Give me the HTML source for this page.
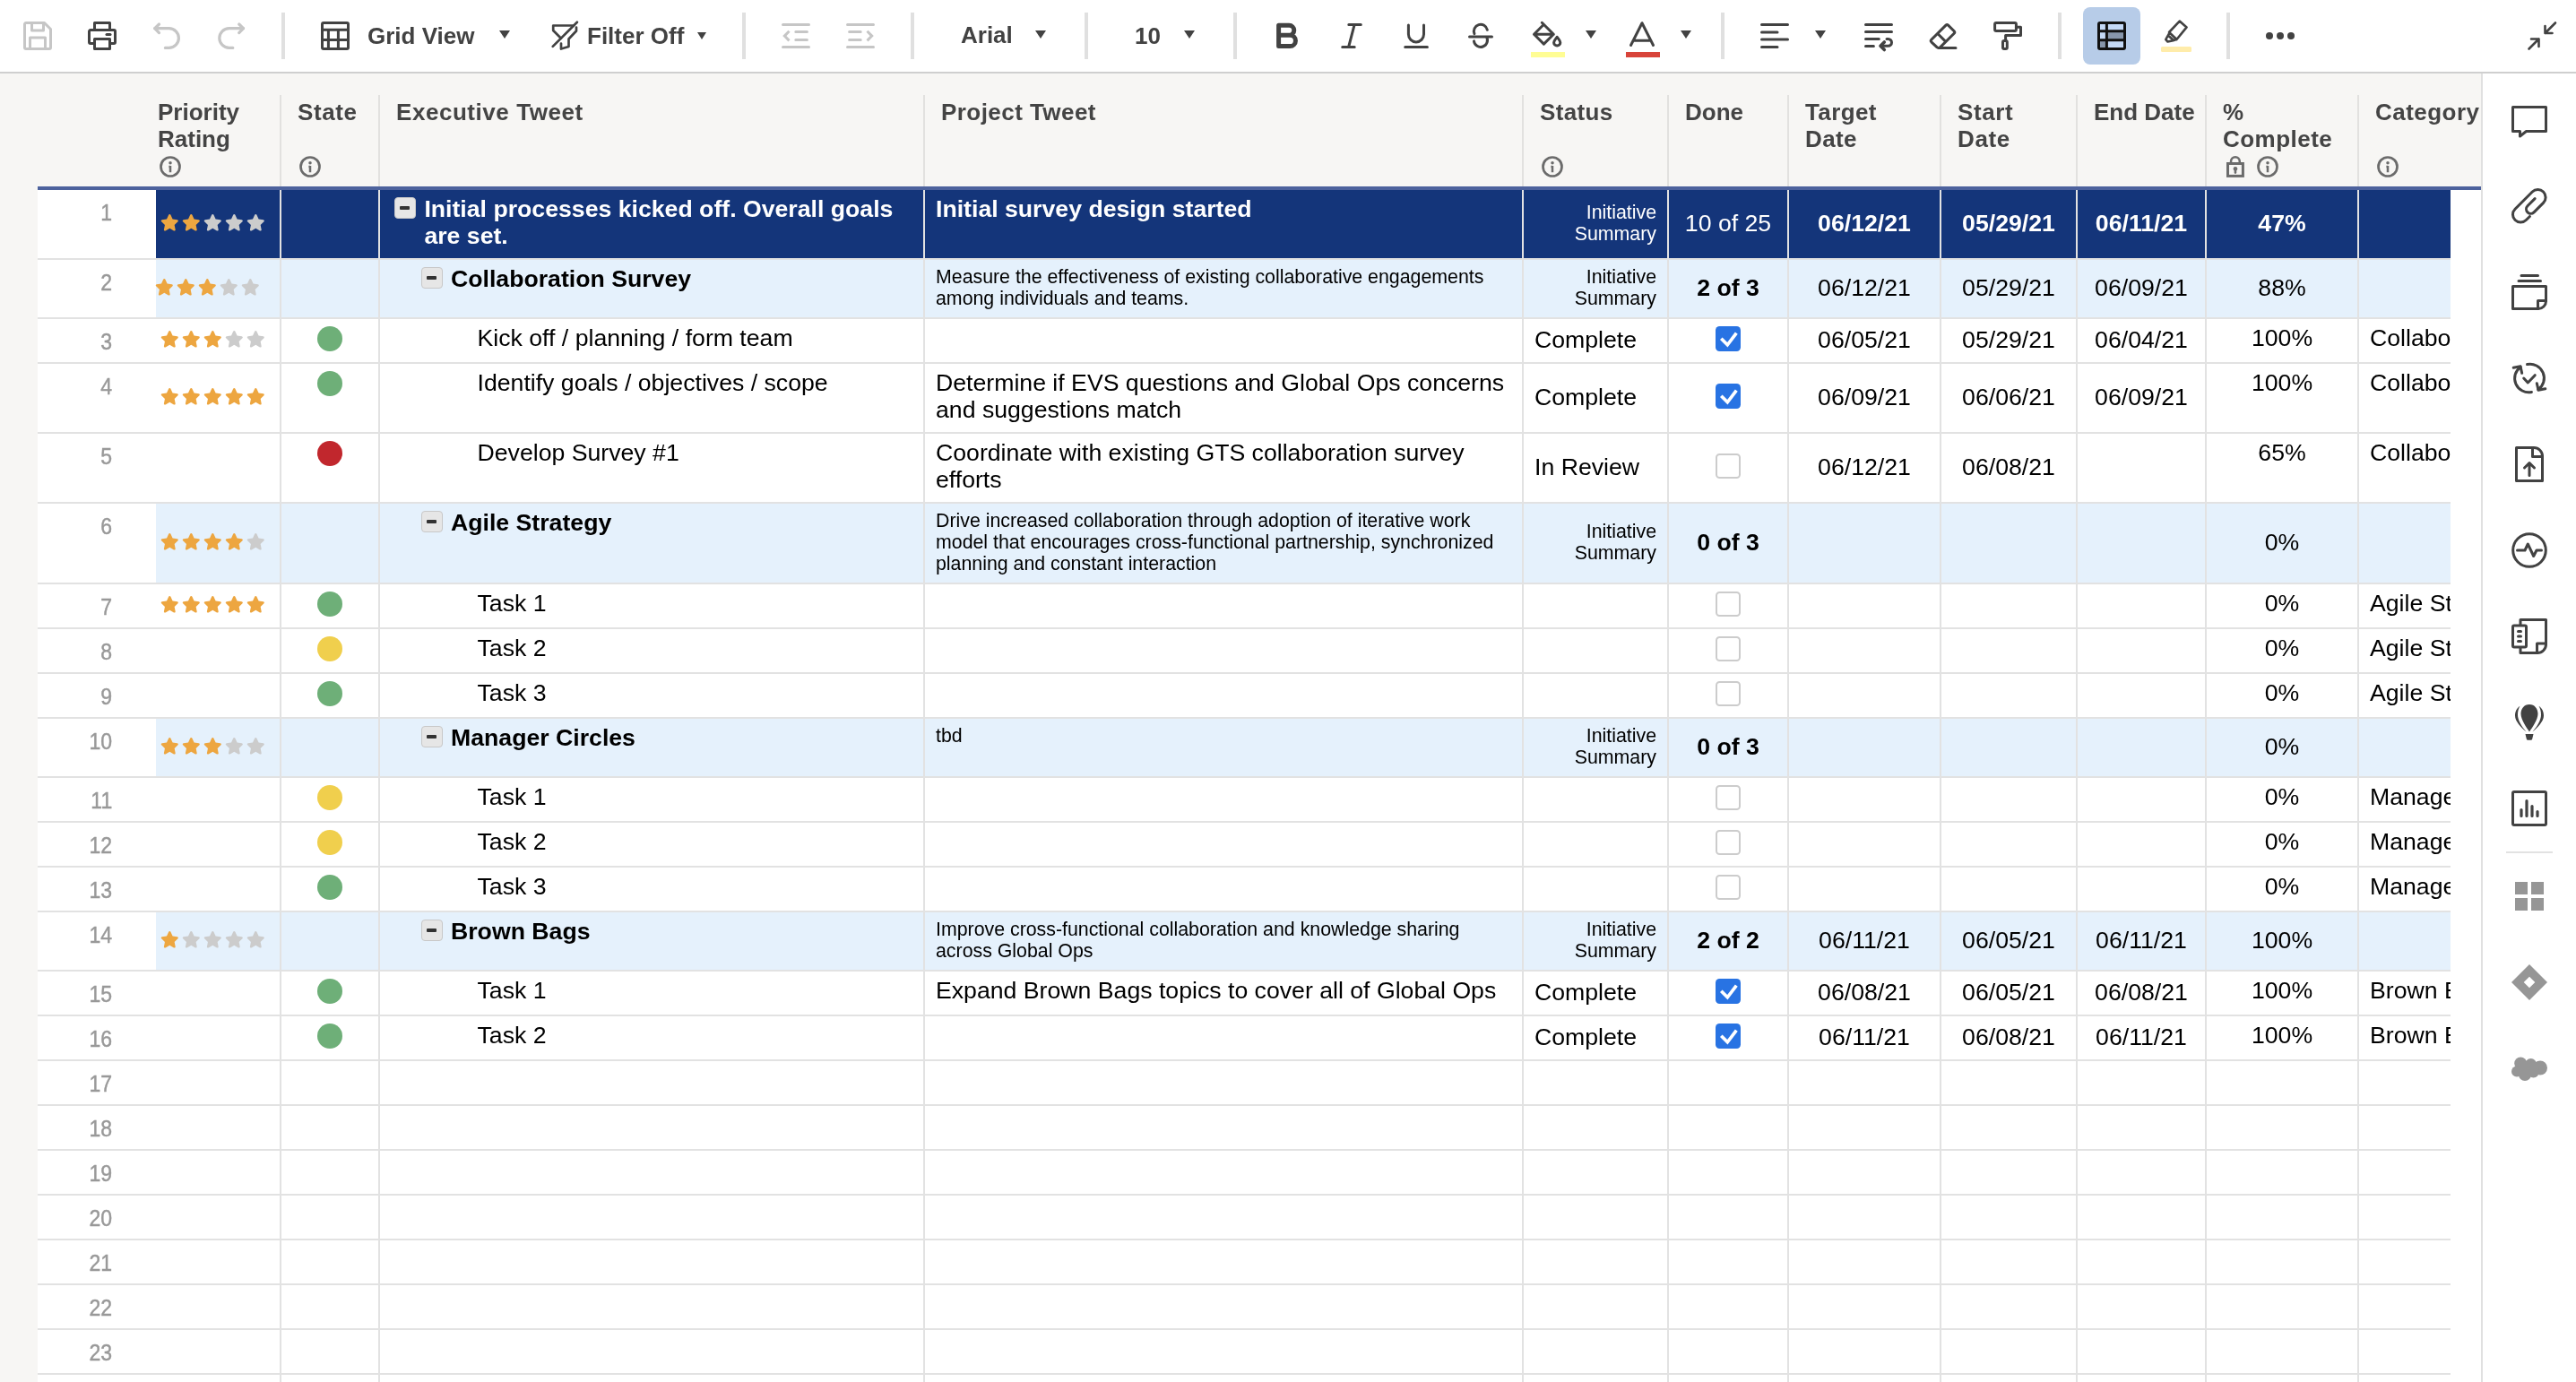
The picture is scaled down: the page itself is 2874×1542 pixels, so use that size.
<!DOCTYPE html><html><head><meta charset="utf-8"><title>Grid</title><style>
*{box-sizing:border-box;margin:0;padding:0}
html,body{width:2874px;height:1542px;overflow:hidden;background:#fff}
#root{position:absolute;left:0;top:0;width:2874px;height:1542px;overflow:hidden;will-change:transform}
body{font-family:"Liberation Sans",sans-serif;position:relative;color:#000}
.abs{position:absolute}
#toolbar{position:absolute;left:0;top:0;width:2874px;height:80px;background:#fff}
#tbline{position:absolute;left:0;top:80px;width:2874px;height:2px;background:#cfcfcf}
.sep{position:absolute;top:14px;width:4px;height:52px;background:#e0e0e0}
.tbt{position:absolute;font-weight:bold;font-size:26px;color:#424242;white-space:nowrap;line-height:30px}
.tri{position:absolute;width:0;height:0;border-left:6px solid transparent;border-right:6px solid transparent;border-top:9px solid #424242}
svg{position:absolute;overflow:visible}
#gutter{position:absolute;left:0;top:82px;width:42px;height:1460px;background:#f7f6f4}
#colhdr{position:absolute;left:0;top:82px;width:2768px;height:126px;background:#f7f6f4}
#hline{position:absolute;left:42px;top:208px;width:2726px;height:4px;background:#4d629d}
.hsep{position:absolute;top:106px;width:2px;height:102px;background:#e2e1df}
.ht{position:absolute;font-weight:bold;font-size:26px;line-height:30px;color:#444;white-space:nowrap}
#grid{position:absolute;left:42px;top:212px;width:2692px;height:1330px;background:#fff;overflow:hidden}
.row{position:absolute;left:0;width:2692px}
.rb{position:absolute;left:0;width:2692px;height:2px;background:#e2e2e2}
.vl{position:absolute;top:0;width:2px;height:1330px;background:#e2e2e2}
.rn span{display:inline-block;transform:scaleX(.91);transform-origin:right center}
.rn{position:absolute;left:0;width:83.4px;text-align:right;font-size:25.3px;line-height:28px;color:#999;-webkit-text-stroke:0.45px #999}
.c{position:absolute;display:flex;overflow:hidden;font-size:26.667px;line-height:30px;white-space:nowrap}
.c.top{align-items:flex-start;padding-top:6px}
.c.mid{align-items:center;padding-bottom:1.5px}
.c.l{justify-content:flex-start;padding-left:12px}
.c.ctr{justify-content:center}
.c.r{justify-content:flex-end;padding-right:12px;text-align:right}
.c.sm{font-size:21.333px;line-height:24px}
.c.sm.top{padding-top:6.6px}
.b{font-weight:bold}
.w{color:#fff}
.dot{position:absolute;width:28px;height:28px;border-radius:50%}
.cb{position:absolute;width:28px;height:28px;border-radius:4.5px}
.cb.off{background:#fff;border:2px solid #ccc}
.cb.on{background:#2873e3}
.ex{position:absolute;width:24px;height:24px;border-radius:4px;background:#e6e6e6;border:1.5px solid #c8c8c8}
.ex:after{content:"";position:absolute;left:5px;top:8.5px;width:11px;height:4px;background:#333;border-radius:1px}
#rpanel{position:absolute;left:2768px;top:82px;width:106px;height:1460px;background:#fff;border-left:2px solid #e0e0e0}
</style></head><body><div id="root"><div id="toolbar"></div><div id="tbline"></div>
<div class="sep" style="left:314px"></div>
<div class="sep" style="left:828px"></div>
<div class="sep" style="left:1016px"></div>
<div class="sep" style="left:1210px"></div>
<div class="sep" style="left:1376px"></div>
<div class="sep" style="left:1920px"></div>
<div class="sep" style="left:2296px"></div>
<div class="sep" style="left:2484px"></div>
<svg style="left:26px;top:24px" width="32" height="32" viewBox="0 0 32 32" fill="none" stroke="#c6c6c6" stroke-width="3" stroke-linecap="round" stroke-linejoin="round" ><path d="M3 1.5H23.5L30.5 8.5V29a1.5 1.5 0 0 1-1.5 1.5H3A1.5 1.5 0 0 1 1.5 29V3A1.5 1.5 0 0 1 3 1.5Z"/><path d="M9.5 1.5V10H22.5V1.5"/><path d="M7.5 30.5V18H24.5V30.5"/></svg>
<svg style="left:98px;top:24px" width="32" height="32" viewBox="0 0 32 32" fill="none" stroke="#424242" stroke-width="3" stroke-linecap="round" stroke-linejoin="round" ><path d="M7.5 24.5H3A1.5 1.5 0 0 1 1.5 23V11A1.5 1.5 0 0 1 3 9.5H29A1.5 1.5 0 0 1 30.5 11V23A1.5 1.5 0 0 1 29 24.5H24.5"/><path d="M7.5 9.5V1.5H24.5V9.5"/><rect x="7.5" y="19.5" width="17" height="11"/><path d="M21 14.5H25"/></svg>
<svg style="left:170px;top:24px" width="32" height="32" viewBox="0 0 32 32" fill="none" stroke="#c6c6c6" stroke-width="3.2" stroke-linecap="round" stroke-linejoin="round" ><path d="M7.5 3L2.7 7.7L7.5 12.6"/><path d="M2.7 7.7H18.55A10.85 10.85 0 0 1 18.55 29.4H14.4"/></svg>
<svg style="left:242px;top:24px" width="32" height="32" viewBox="0 0 32 32" fill="none" stroke="#c6c6c6" stroke-width="3.2" stroke-linecap="round" stroke-linejoin="round" ><path d="M24.7 3L29.5 7.7L24.7 12.6"/><path d="M29.5 7.7H13.65A10.85 10.85 0 0 0 13.65 29.4H17.8"/></svg>
<svg style="left:358px;top:24px" width="32" height="32" viewBox="0 0 32 32" fill="none" stroke="#424242" stroke-width="3" stroke-linecap="round" stroke-linejoin="round" ><rect x="1.5" y="1.5" width="29" height="29" rx="1.5"/><path d="M1.5 9.3H30.5M1.5 20.6H30.5M8.4 9.3V30.5M19.4 9.3V30.5"/></svg>
<div class="tbt" style="left:410px;top:25px" id="t_grid">Grid View</div>
<div class="tri" style="left:557px;top:34px"></div>
<svg style="left:615px;top:24px" width="32" height="32" viewBox="0 0 32 32" fill="none" stroke="#424242" stroke-width="2.7" stroke-linecap="round" stroke-linejoin="round" ><path d="M24.5 4.5H2.2V10L10.9 18.7"/><path d="M28 6.5V10.5L19.5 19.5V28L11 30.5V24.5"/><path d="M28.9 0.8L1.7 27.9"/></svg>
<div class="tbt" style="left:655px;top:25px" id="t_filter">Filter Off</div>
<div class="tri" style="left:778px;top:36px;border-left-width:5.5px;border-right-width:5.5px;border-top-width:8px"></div>
<svg style="left:872px;top:24px" width="32" height="32" viewBox="0 0 32 32" fill="none" stroke="#c6c6c6" stroke-width="3" stroke-linecap="round" stroke-linejoin="round" ><path d="M1.5 3.5H30.5M15.8 11.6H28.4M15.8 20.5H28.4M1.5 28.5H30.5"/><path d="M8.5 10.8L3.3 16.1L8.5 21.4" stroke-linecap="butt" stroke-linejoin="miter"/></svg>
<svg style="left:944px;top:24px" width="32" height="32" viewBox="0 0 32 32" fill="none" stroke="#c6c6c6" stroke-width="3" stroke-linecap="round" stroke-linejoin="round" ><path d="M1.5 3.5H30.5M3.6 11.6H16.2M3.6 20.5H16.2M1.5 28.5H30.5"/><path d="M23.5 10.8L28.7 16.1L23.5 21.4" stroke-linecap="butt" stroke-linejoin="miter"/></svg>
<div class="tbt" style="left:1072px;top:24px" id="t_arial">Arial</div>
<div class="tri" style="left:1155px;top:34px"></div>
<div class="tbt" style="left:1266px;top:25px" id="t_10">10</div>
<div class="tri" style="left:1321px;top:34px"></div>
<svg style="left:1424px;top:24px" width="24" height="32" viewBox="0 0 24 32" fill="none" stroke="#424242" stroke-width="5" stroke-linecap="round" stroke-linejoin="round" ><path d="M2.6 4.3H14.25A5.45 5.45 0 0 1 14.25 15.3H2.6M2.6 15.3H15.35A6.1 6.1 0 0 1 15.35 27.5H2.6ZM2.6 4.3V27.5"/></svg>
<svg style="left:1494px;top:24px" width="32" height="32" viewBox="0 0 32 32" fill="none" stroke="#424242" stroke-width="3" stroke-linecap="round" stroke-linejoin="round" ><path d="M10.8 3.6H24.3M3.7 28.5H17.2M17.1 3.6L10.6 28.5"/></svg>
<svg style="left:1564px;top:24px" width="32" height="32" viewBox="0 0 32 32" fill="none" stroke="#424242" stroke-width="3" stroke-linecap="round" stroke-linejoin="round" ><path d="M7.4 4.1V14.35A8.55 8.55 0 0 0 24.5 14.35V4.1M3.7 28.5H28.4"/></svg>
<svg style="left:1636px;top:24px" width="32" height="32" viewBox="0 0 32 32" fill="none" stroke="#424242" stroke-width="3" stroke-linecap="round" stroke-linejoin="round" ><path d="M23.33 9.28A7.55 7.55 0 1 0 8.95 13.68M8.45 21.87A7.55 7.55 0 1 0 22.4 17M3.5 17H28.5"/></svg>
<svg style="left:1708px;top:22px" width="36" height="34" viewBox="0 0 36 34" fill="none" stroke="#424242" stroke-width="3" stroke-linecap="round" stroke-linejoin="round" ><path d="M12.3 3.3L25.3 16.2L14.4 27.1L3.5 16.2L14.4 5.3M3.5 16.2H25.3"/><path d="M29.2 19.3C27.5 21.8 25.6 23.6 25.6 25.5A3.6 3.6 0 0 0 32.8 25.5C32.8 23.6 30.9 21.8 29.2 19.3Z"/></svg>
<div class="abs" style="left:1708px;top:58px;width:38px;height:6px;background:#fffd94"></div>
<div class="tri" style="left:1769px;top:34px"></div>
<svg style="left:1816px;top:22px" width="32" height="32" viewBox="0 0 32 32" fill="none" stroke="#424242" stroke-width="3" stroke-linecap="round" stroke-linejoin="round" ><path d="M3.5 28.5L16 3.7L28.5 28.5M6.2 23.3H25.8"/></svg>
<div class="abs" style="left:1814px;top:58px;width:38px;height:6px;background:#d8443a"></div>
<div class="tri" style="left:1875px;top:34px"></div>
<svg style="left:1964px;top:24px" width="32" height="32" viewBox="0 0 32 32" fill="none" stroke="#424242" stroke-width="3" stroke-linecap="round" stroke-linejoin="round" ><path d="M1.5 3.5H30.5M1.5 12H19M1.5 20H30.5M1.5 28.5H19"/></svg>
<div class="tri" style="left:2025px;top:34px"></div>
<svg style="left:2080px;top:24px" width="32" height="34" viewBox="0 0 32 34" fill="none" stroke="#424242" stroke-width="3" stroke-linecap="round" stroke-linejoin="round" ><path d="M1.5 3.4H30.5M1.5 11.5H30.5M1.5 19.5H16.3M1.5 27.6H10.4M25 19.5H26.6A3.9 3.9 0 0 1 26.6 27.3H18.5"/><path d="M22.3 23L18 27.3L22.3 31.6" stroke-width="3.6"/></svg>
<svg style="left:2152px;top:24px" width="32" height="32" viewBox="0 0 32 32" fill="none" stroke="#424242" stroke-width="3" stroke-linecap="round" stroke-linejoin="round" ><path d="M30 29.4H10.6A2 2 0 0 1 9.2 28.8L2.8 22.8A1.8 1.8 0 0 1 2.8 20.3L19 4.1A1.8 1.8 0 0 1 21.5 4.1L28.2 10.8A1.8 1.8 0 0 1 28.2 13.3L12 29.4M9.8 13.5L18.7 22.4"/></svg>
<svg style="left:2224px;top:24px" width="32" height="32" viewBox="0 0 32 32" fill="none" stroke="#424242" stroke-width="3" stroke-linecap="round" stroke-linejoin="round" ><rect x="1.6" y="1.4" width="23.8" height="9" rx="1.5"/><path d="M25.4 6.2H30.5V15.5H13.6V21"/><rect x="10.5" y="21.4" width="4.8" height="9" rx="1.5"/></svg>
<div class="abs" style="left:2324px;top:8px;width:64px;height:64px;border-radius:8px;background:#b7cce8"></div>
<svg style="left:2340px;top:24px" width="32" height="32" viewBox="0 0 32 32" fill="none" stroke="#111" stroke-width="3" stroke-linecap="round" stroke-linejoin="round" ><rect x="1.5" y="1.5" width="29" height="29" fill="#c4d9f6" stroke="none"/><rect x="10.4" y="10.6" width="20" height="10" fill="#8796ab" stroke="none"/><rect x="1.5" y="20.7" width="9" height="9.5" fill="#8796ab" stroke="none"/><rect x="1.5" y="1.5" width="29" height="29" rx="1.5"/><path d="M1.5 10.65H30.5M1.5 20.7H30.5M10.4 1.5V30.5"/></svg>
<svg style="left:2412px;top:20px" width="34" height="30" viewBox="0 0 34 30" fill="none" stroke="#424242" stroke-width="2.6" stroke-linecap="round" stroke-linejoin="round" ><path d="M19.7 3.6L27.6 10.4L16.5 24L8 16ZM8.5 16.5L4.3 24.2L6.5 26.5L12.5 25.2L16 24M8 20.5L12.5 24.5"/></svg>
<div class="abs" style="left:2411px;top:52px;width:34px;height:6px;border-radius:1.5px;background:#ffecaa"></div>
<div class="abs" style="left:2528px;top:36px;width:8px;height:8px;border-radius:50%;background:#424242"></div>
<div class="abs" style="left:2540px;top:36px;width:8px;height:8px;border-radius:50%;background:#424242"></div>
<div class="abs" style="left:2552px;top:36px;width:8px;height:8px;border-radius:50%;background:#424242"></div>
<svg style="left:2820px;top:24px" width="32" height="32" viewBox="0 0 32 32" fill="none" stroke="#424242" stroke-width="2.6" stroke-linecap="round" stroke-linejoin="round" ><path d="M31 1.5L19.5 13M19.5 5V13H27.5M1.5 30.5L12.5 19.5M4 19.5H12.5V28"/></svg>
<div id="colhdr"></div><div id="gutter"></div>
<div class="hsep" style="left:312px"></div>
<div class="hsep" style="left:422px"></div>
<div class="hsep" style="left:1030px"></div>
<div class="hsep" style="left:1698px"></div>
<div class="hsep" style="left:1860px"></div>
<div class="hsep" style="left:1994px"></div>
<div class="hsep" style="left:2164px"></div>
<div class="hsep" style="left:2316px"></div>
<div class="hsep" style="left:2460px"></div>
<div class="hsep" style="left:2630px"></div>
<div class="ht" id="h0" style="left:176px;top:110px;letter-spacing:0px">Priority<br>Rating</div>
<div class="ht" id="h1" style="left:332px;top:110px;letter-spacing:0.6px">State</div>
<div class="ht" id="h2" style="left:442px;top:110px;letter-spacing:0.55px">Executive Tweet</div>
<div class="ht" id="h3" style="left:1050px;top:110px;letter-spacing:0.45px">Project Tweet</div>
<div class="ht" id="h4" style="left:1718px;top:110px;letter-spacing:0.35px">Status</div>
<div class="ht" id="h5" style="left:1880px;top:110px;letter-spacing:0px">Done</div>
<div class="ht" id="h6" style="left:2014px;top:110px;letter-spacing:0.4px">Target<br>Date</div>
<div class="ht" id="h7" style="left:2184px;top:110px;letter-spacing:0.6px">Start<br>Date</div>
<div class="ht" id="h8" style="left:2336px;top:110px;letter-spacing:0px">End Date</div>
<div class="ht" id="h9" style="left:2480px;top:110px;letter-spacing:0.47px">%<br>Complete</div>
<div class="ht" id="h10" style="left:2650px;top:110px;letter-spacing:0.47px">Category</div>
<svg style="left:178px;top:174px" width="24" height="24" viewBox="0 0 24 24" fill="none" stroke="#6b6b6b" stroke-width="2.7" stroke-linecap="round" stroke-linejoin="round" ><circle cx="12" cy="12" r="10.5"/><path d="M12 11V18.2M10.4 11.9H12" stroke-width="2.5" stroke-linecap="butt"/><circle cx="12" cy="7.7" r="1.75" fill="#6b6b6b" stroke="none"/></svg>
<svg style="left:334px;top:174px" width="24" height="24" viewBox="0 0 24 24" fill="none" stroke="#6b6b6b" stroke-width="2.7" stroke-linecap="round" stroke-linejoin="round" ><circle cx="12" cy="12" r="10.5"/><path d="M12 11V18.2M10.4 11.9H12" stroke-width="2.5" stroke-linecap="butt"/><circle cx="12" cy="7.7" r="1.75" fill="#6b6b6b" stroke="none"/></svg>
<svg style="left:1720px;top:174px" width="24" height="24" viewBox="0 0 24 24" fill="none" stroke="#6b6b6b" stroke-width="2.7" stroke-linecap="round" stroke-linejoin="round" ><circle cx="12" cy="12" r="10.5"/><path d="M12 11V18.2M10.4 11.9H12" stroke-width="2.5" stroke-linecap="butt"/><circle cx="12" cy="7.7" r="1.75" fill="#6b6b6b" stroke="none"/></svg>
<svg style="left:2518px;top:174px" width="24" height="24" viewBox="0 0 24 24" fill="none" stroke="#6b6b6b" stroke-width="2.7" stroke-linecap="round" stroke-linejoin="round" ><circle cx="12" cy="12" r="10.5"/><path d="M12 11V18.2M10.4 11.9H12" stroke-width="2.5" stroke-linecap="butt"/><circle cx="12" cy="7.7" r="1.75" fill="#6b6b6b" stroke="none"/></svg>
<svg style="left:2652px;top:174px" width="24" height="24" viewBox="0 0 24 24" fill="none" stroke="#6b6b6b" stroke-width="2.7" stroke-linecap="round" stroke-linejoin="round" ><circle cx="12" cy="12" r="10.5"/><path d="M12 11V18.2M10.4 11.9H12" stroke-width="2.5" stroke-linecap="butt"/><circle cx="12" cy="7.7" r="1.75" fill="#6b6b6b" stroke="none"/></svg>
<svg style="left:2482px;top:174px" width="24" height="24" viewBox="0 0 24 24" fill="none" stroke="#6b6b6b" stroke-width="2" stroke-linecap="round" stroke-linejoin="round" ><rect x="3.5" y="8.5" width="16.9" height="13.9" stroke-width="3" stroke-linejoin="miter"/><path d="M7.05 7.5V6.05A4.85 4.85 0 0 1 16.75 6.05V7.5" stroke-width="2.5" stroke-linecap="butt"/><circle cx="11.95" cy="14.2" r="2.3" fill="#6b6b6b" stroke="none"/><path d="M11.95 14.2V18.6" stroke-width="2.6"/></svg>
<div id="hline"></div>
<div id="grid">
<div class="abs" style="left:132px;top:0px;width:2560px;height:76px;background:#14357a"></div>
<div class="rb" style="top:76px"></div>
<div class="abs" style="left:132px;top:78px;width:2560px;height:64px;background:#e5f1fc"></div>
<div class="rb" style="top:142px"></div>
<div class="rb" style="top:192px"></div>
<div class="rb" style="top:270px"></div>
<div class="rb" style="top:348px"></div>
<div class="abs" style="left:132px;top:350px;width:2560px;height:88px;background:#e5f1fc"></div>
<div class="rb" style="top:438px"></div>
<div class="rb" style="top:488px"></div>
<div class="rb" style="top:538px"></div>
<div class="rb" style="top:588px"></div>
<div class="abs" style="left:132px;top:590px;width:2560px;height:64px;background:#e5f1fc"></div>
<div class="rb" style="top:654px"></div>
<div class="rb" style="top:704px"></div>
<div class="rb" style="top:754px"></div>
<div class="rb" style="top:804px"></div>
<div class="abs" style="left:132px;top:806px;width:2560px;height:64px;background:#e5f1fc"></div>
<div class="rb" style="top:870px"></div>
<div class="rb" style="top:920px"></div>
<div class="rb" style="top:970px"></div>
<div class="rb" style="top:1020px"></div>
<div class="rb" style="top:1070px"></div>
<div class="rb" style="top:1120px"></div>
<div class="rb" style="top:1170px"></div>
<div class="rb" style="top:1220px"></div>
<div class="rb" style="top:1270px"></div>
<div class="rb" style="top:1320px"></div>
<div class="rb" style="top:1370px"></div>
<div class="vl" style="left:270px"></div>
<div class="vl" style="left:380px"></div>
<div class="vl" style="left:988px"></div>
<div class="vl" style="left:1656px"></div>
<div class="vl" style="left:1818px"></div>
<div class="vl" style="left:1952px"></div>
<div class="vl" style="left:2122px"></div>
<div class="vl" style="left:2274px"></div>
<div class="vl" style="left:2418px"></div>
<div class="vl" style="left:2588px"></div>
<div class="rn" style="top:11.3px"><span>1</span></div>
<div class="rn" style="top:89.3px"><span>2</span></div>
<div class="rn" style="top:155.3px"><span>3</span></div>
<div class="rn" style="top:205.3px"><span>4</span></div>
<div class="rn" style="top:283.3px"><span>5</span></div>
<div class="rn" style="top:361.3px"><span>6</span></div>
<div class="rn" style="top:451.3px"><span>7</span></div>
<div class="rn" style="top:501.3px"><span>8</span></div>
<div class="rn" style="top:551.3px"><span>9</span></div>
<div class="rn" style="top:601.3px"><span>10</span></div>
<div class="rn" style="top:667.3px"><span>11</span></div>
<div class="rn" style="top:717.3px"><span>12</span></div>
<div class="rn" style="top:767.3px"><span>13</span></div>
<div class="rn" style="top:817.3px"><span>14</span></div>
<div class="rn" style="top:883.3px"><span>15</span></div>
<div class="rn" style="top:933.3px"><span>16</span></div>
<div class="rn" style="top:983.3px"><span>17</span></div>
<div class="rn" style="top:1033.3px"><span>18</span></div>
<div class="rn" style="top:1083.3px"><span>19</span></div>
<div class="rn" style="top:1133.3px"><span>20</span></div>
<div class="rn" style="top:1183.3px"><span>21</span></div>
<div class="rn" style="top:1233.3px"><span>22</span></div>
<div class="rn" style="top:1283.3px"><span>23</span></div>
<div class="rn" style="top:1333.3px"><span>24</span></div>
<svg style="left:136.7px;top:26.2px" width="20.6" height="20.9" viewBox="0 0 20 20" preserveAspectRatio="none"><path d="M10 0.9c.5 0 .9.3 1.1.8l2.1 4.6 5 .6c1 .1 1.4 1.3.7 2l-3.7 3.5 1 5c.2 1-.8 1.7-1.7 1.2L10 16.1l-4.5 2.5c-.9.5-1.9-.2-1.7-1.2l1-5L1.100 8.900c-.7-.7-.3-1.900.7-2l5-.600 2.100-4.600c.2-.5.600-.800 1.100-.800z" fill="#eda640"/></svg>
<svg style="left:160.7px;top:26.2px" width="20.6" height="20.9" viewBox="0 0 20 20" preserveAspectRatio="none"><path d="M10 0.9c.5 0 .9.3 1.1.8l2.1 4.6 5 .6c1 .1 1.4 1.3.7 2l-3.7 3.5 1 5c.2 1-.8 1.7-1.7 1.2L10 16.1l-4.5 2.5c-.9.5-1.9-.2-1.7-1.2l1-5L1.100 8.900c-.7-.7-.3-1.900.7-2l5-.600 2.100-4.600c.2-.5.600-.800 1.100-.800z" fill="#eda640"/></svg>
<svg style="left:184.7px;top:26.2px" width="20.6" height="20.9" viewBox="0 0 20 20" preserveAspectRatio="none"><path d="M10 0.9c.5 0 .9.3 1.1.8l2.1 4.6 5 .6c1 .1 1.4 1.3.7 2l-3.7 3.5 1 5c.2 1-.8 1.7-1.7 1.2L10 16.1l-4.5 2.5c-.9.5-1.9-.2-1.7-1.2l1-5L1.100 8.900c-.7-.7-.3-1.900.7-2l5-.600 2.100-4.600c.2-.5.600-.800 1.100-.800z" fill="#cccccc"/></svg>
<svg style="left:208.7px;top:26.2px" width="20.6" height="20.9" viewBox="0 0 20 20" preserveAspectRatio="none"><path d="M10 0.9c.5 0 .9.3 1.1.8l2.1 4.6 5 .6c1 .1 1.4 1.3.7 2l-3.7 3.5 1 5c.2 1-.8 1.7-1.7 1.2L10 16.1l-4.5 2.5c-.9.5-1.9-.2-1.7-1.2l1-5L1.100 8.900c-.7-.7-.3-1.900.7-2l5-.600 2.100-4.600c.2-.5.600-.800 1.100-.800z" fill="#cccccc"/></svg>
<svg style="left:232.7px;top:26.2px" width="20.6" height="20.9" viewBox="0 0 20 20" preserveAspectRatio="none"><path d="M10 0.9c.5 0 .9.3 1.1.8l2.1 4.6 5 .6c1 .1 1.4 1.3.7 2l-3.7 3.5 1 5c.2 1-.8 1.7-1.7 1.2L10 16.1l-4.5 2.5c-.9.5-1.9-.2-1.7-1.2l1-5L1.100 8.900c-.7-.7-.3-1.900.7-2l5-.600 2.100-4.600c.2-.5.600-.800 1.100-.800z" fill="#cccccc"/></svg>
<div class="ex" style="left:398px;top:8px"></div>
<div class="c top l b w" style="left:382px;top:0px;width:606px;height:76px;padding-left:49.39999999999998px"><span>Initial processes kicked off. Overall goals<br>are set.</span></div>
<div class="c top l b w" style="left:990px;top:0px;width:666px;height:76px;">Initial survey design started</div>
<div class="c mid r sm w" style="left:1658px;top:0px;width:160px;height:76px;"><span>Initiative<br>Summary</span></div>
<div class="c mid ctr w" style="left:1820px;top:0px;width:132px;height:76px;">10 of 25</div>
<div class="c mid ctr b w" style="left:1954px;top:0px;width:168px;height:76px;">06/12/21</div>
<div class="c mid ctr b w" style="left:2124px;top:0px;width:150px;height:76px;">05/29/21</div>
<div class="c mid ctr b w" style="left:2276px;top:0px;width:142px;height:76px;">06/11/21</div>
<div class="c mid ctr b w" style="left:2420px;top:0px;width:168px;height:76px;">47%</div>
<svg style="left:130.7px;top:98.2px" width="20.6" height="20.9" viewBox="0 0 20 20" preserveAspectRatio="none"><path d="M10 0.9c.5 0 .9.3 1.1.8l2.1 4.6 5 .6c1 .1 1.4 1.3.7 2l-3.7 3.5 1 5c.2 1-.8 1.7-1.7 1.2L10 16.1l-4.5 2.5c-.9.5-1.9-.2-1.7-1.2l1-5L1.100 8.900c-.7-.7-.3-1.900.7-2l5-.600 2.100-4.600c.2-.5.600-.800 1.100-.800z" fill="#eda640"/></svg>
<svg style="left:154.7px;top:98.2px" width="20.6" height="20.9" viewBox="0 0 20 20" preserveAspectRatio="none"><path d="M10 0.9c.5 0 .9.3 1.1.8l2.1 4.6 5 .6c1 .1 1.4 1.3.7 2l-3.7 3.5 1 5c.2 1-.8 1.7-1.7 1.2L10 16.1l-4.5 2.5c-.9.5-1.9-.2-1.7-1.2l1-5L1.100 8.900c-.7-.7-.3-1.900.7-2l5-.600 2.100-4.600c.2-.5.600-.800 1.100-.800z" fill="#eda640"/></svg>
<svg style="left:178.7px;top:98.2px" width="20.6" height="20.9" viewBox="0 0 20 20" preserveAspectRatio="none"><path d="M10 0.9c.5 0 .9.3 1.1.8l2.1 4.6 5 .6c1 .1 1.4 1.3.7 2l-3.7 3.5 1 5c.2 1-.8 1.7-1.7 1.2L10 16.1l-4.5 2.5c-.9.5-1.9-.2-1.7-1.2l1-5L1.100 8.900c-.7-.7-.3-1.900.7-2l5-.600 2.100-4.600c.2-.5.600-.800 1.100-.800z" fill="#eda640"/></svg>
<svg style="left:202.7px;top:98.2px" width="20.6" height="20.9" viewBox="0 0 20 20" preserveAspectRatio="none"><path d="M10 0.9c.5 0 .9.3 1.1.8l2.1 4.6 5 .6c1 .1 1.4 1.3.7 2l-3.7 3.5 1 5c.2 1-.8 1.7-1.7 1.2L10 16.1l-4.5 2.5c-.9.5-1.9-.2-1.7-1.2l1-5L1.100 8.900c-.7-.7-.3-1.900.7-2l5-.600 2.100-4.600c.2-.5.600-.800 1.100-.800z" fill="#cccccc"/></svg>
<svg style="left:226.7px;top:98.2px" width="20.6" height="20.9" viewBox="0 0 20 20" preserveAspectRatio="none"><path d="M10 0.9c.5 0 .9.3 1.1.8l2.1 4.6 5 .6c1 .1 1.4 1.3.7 2l-3.7 3.5 1 5c.2 1-.8 1.7-1.7 1.2L10 16.1l-4.5 2.5c-.9.5-1.9-.2-1.7-1.2l1-5L1.100 8.900c-.7-.7-.3-1.900.7-2l5-.600 2.100-4.600c.2-.5.600-.800 1.100-.800z" fill="#cccccc"/></svg>
<div class="ex" style="left:428px;top:86px"></div>
<div class="c top l b" style="left:382px;top:78px;width:606px;height:64px;padding-left:79px">Collaboration Survey</div>
<div class="c top l sm" style="left:990px;top:78px;width:666px;height:64px;"><span>Measure the effectiveness of existing collaborative engagements<br>among individuals and teams.</span></div>
<div class="c mid r sm" style="left:1658px;top:78px;width:160px;height:64px;"><span>Initiative<br>Summary</span></div>
<div class="c mid ctr b" style="left:1820px;top:78px;width:132px;height:64px;">2 of 3</div>
<div class="c mid ctr" style="left:1954px;top:78px;width:168px;height:64px;">06/12/21</div>
<div class="c mid ctr" style="left:2124px;top:78px;width:150px;height:64px;">05/29/21</div>
<div class="c mid ctr" style="left:2276px;top:78px;width:142px;height:64px;">06/09/21</div>
<div class="c mid ctr" style="left:2420px;top:78px;width:168px;height:64px;">88%</div>
<svg style="left:136.7px;top:156.2px" width="20.6" height="20.9" viewBox="0 0 20 20" preserveAspectRatio="none"><path d="M10 0.9c.5 0 .9.3 1.1.8l2.1 4.6 5 .6c1 .1 1.4 1.3.7 2l-3.7 3.5 1 5c.2 1-.8 1.7-1.7 1.2L10 16.1l-4.5 2.5c-.9.5-1.9-.2-1.7-1.2l1-5L1.100 8.900c-.7-.7-.3-1.900.7-2l5-.600 2.100-4.600c.2-.5.600-.800 1.100-.800z" fill="#eda640"/></svg>
<svg style="left:160.7px;top:156.2px" width="20.6" height="20.9" viewBox="0 0 20 20" preserveAspectRatio="none"><path d="M10 0.9c.5 0 .9.3 1.1.8l2.1 4.6 5 .6c1 .1 1.4 1.3.7 2l-3.7 3.5 1 5c.2 1-.8 1.7-1.7 1.2L10 16.1l-4.5 2.5c-.9.5-1.9-.2-1.7-1.2l1-5L1.100 8.900c-.7-.7-.3-1.900.7-2l5-.600 2.100-4.600c.2-.5.600-.800 1.100-.800z" fill="#eda640"/></svg>
<svg style="left:184.7px;top:156.2px" width="20.6" height="20.9" viewBox="0 0 20 20" preserveAspectRatio="none"><path d="M10 0.9c.5 0 .9.3 1.1.8l2.1 4.6 5 .6c1 .1 1.4 1.3.7 2l-3.7 3.5 1 5c.2 1-.8 1.7-1.7 1.2L10 16.1l-4.5 2.5c-.9.5-1.9-.2-1.7-1.2l1-5L1.100 8.900c-.7-.7-.3-1.900.7-2l5-.600 2.100-4.600c.2-.5.600-.800 1.100-.800z" fill="#eda640"/></svg>
<svg style="left:208.7px;top:156.2px" width="20.6" height="20.9" viewBox="0 0 20 20" preserveAspectRatio="none"><path d="M10 0.9c.5 0 .9.3 1.1.8l2.1 4.6 5 .6c1 .1 1.4 1.3.7 2l-3.7 3.5 1 5c.2 1-.8 1.7-1.7 1.2L10 16.1l-4.5 2.5c-.9.5-1.9-.2-1.7-1.2l1-5L1.100 8.900c-.7-.7-.3-1.900.7-2l5-.600 2.100-4.600c.2-.5.600-.800 1.100-.800z" fill="#cccccc"/></svg>
<svg style="left:232.7px;top:156.2px" width="20.6" height="20.9" viewBox="0 0 20 20" preserveAspectRatio="none"><path d="M10 0.9c.5 0 .9.3 1.1.8l2.1 4.6 5 .6c1 .1 1.4 1.3.7 2l-3.7 3.5 1 5c.2 1-.8 1.7-1.7 1.2L10 16.1l-4.5 2.5c-.9.5-1.9-.2-1.7-1.2l1-5L1.100 8.900c-.7-.7-.3-1.900.7-2l5-.600 2.100-4.600c.2-.5.600-.800 1.100-.800z" fill="#cccccc"/></svg>
<div class="dot" style="left:312px;top:152px;background:#6eaf78"></div>
<div class="c top l " style="left:382px;top:144px;width:606px;height:48px;padding-left:108.5px">Kick off / planning / form team</div>
<div class="c mid l" style="left:1658px;top:144px;width:160px;height:48px;">Complete</div>
<div class="cb on" style="left:1872px;top:152.0px"><svg style="left:0;top:0" width="28" height="28" viewBox="0 0 28 28" fill="none" stroke="#fff" stroke-width="3.7" stroke-linecap="butt" stroke-linejoin="miter"><path d="M6.3 13.800L13.300 20.800L23.300 7.700"/></svg></div>
<div class="c mid ctr" style="left:1954px;top:144px;width:168px;height:48px;">06/05/21</div>
<div class="c mid ctr" style="left:2124px;top:144px;width:150px;height:48px;">05/29/21</div>
<div class="c mid ctr" style="left:2276px;top:144px;width:142px;height:48px;">06/04/21</div>
<div class="c top ctr" style="left:2420px;top:144px;width:168px;height:48px;">100%</div>
<div class="c top l" style="left:2590px;top:144px;width:102px;height:48px;">Collaboration Survey</div>
<svg style="left:136.7px;top:220.2px" width="20.6" height="20.9" viewBox="0 0 20 20" preserveAspectRatio="none"><path d="M10 0.9c.5 0 .9.3 1.1.8l2.1 4.6 5 .6c1 .1 1.4 1.3.7 2l-3.7 3.5 1 5c.2 1-.8 1.7-1.7 1.2L10 16.1l-4.5 2.5c-.9.5-1.9-.2-1.7-1.2l1-5L1.100 8.900c-.7-.7-.3-1.900.7-2l5-.600 2.100-4.600c.2-.5.600-.800 1.100-.800z" fill="#eda640"/></svg>
<svg style="left:160.7px;top:220.2px" width="20.6" height="20.9" viewBox="0 0 20 20" preserveAspectRatio="none"><path d="M10 0.9c.5 0 .9.3 1.1.8l2.1 4.6 5 .6c1 .1 1.4 1.3.7 2l-3.7 3.5 1 5c.2 1-.8 1.7-1.7 1.2L10 16.1l-4.5 2.5c-.9.5-1.9-.2-1.7-1.2l1-5L1.100 8.900c-.7-.7-.3-1.900.7-2l5-.600 2.100-4.600c.2-.5.600-.800 1.100-.800z" fill="#eda640"/></svg>
<svg style="left:184.7px;top:220.2px" width="20.6" height="20.9" viewBox="0 0 20 20" preserveAspectRatio="none"><path d="M10 0.9c.5 0 .9.3 1.1.8l2.1 4.6 5 .6c1 .1 1.4 1.3.7 2l-3.7 3.5 1 5c.2 1-.8 1.7-1.7 1.2L10 16.1l-4.5 2.5c-.9.5-1.9-.2-1.7-1.2l1-5L1.100 8.900c-.7-.7-.3-1.900.7-2l5-.600 2.100-4.600c.2-.5.600-.800 1.100-.800z" fill="#eda640"/></svg>
<svg style="left:208.7px;top:220.2px" width="20.6" height="20.9" viewBox="0 0 20 20" preserveAspectRatio="none"><path d="M10 0.9c.5 0 .9.3 1.1.8l2.1 4.6 5 .6c1 .1 1.4 1.3.7 2l-3.7 3.5 1 5c.2 1-.8 1.7-1.7 1.2L10 16.1l-4.5 2.5c-.9.5-1.9-.2-1.7-1.2l1-5L1.100 8.900c-.7-.7-.3-1.900.7-2l5-.600 2.100-4.600c.2-.5.600-.800 1.100-.800z" fill="#eda640"/></svg>
<svg style="left:232.7px;top:220.2px" width="20.6" height="20.9" viewBox="0 0 20 20" preserveAspectRatio="none"><path d="M10 0.9c.5 0 .9.3 1.1.8l2.1 4.6 5 .6c1 .1 1.4 1.3.7 2l-3.7 3.5 1 5c.2 1-.8 1.7-1.7 1.2L10 16.1l-4.5 2.5c-.9.5-1.9-.2-1.7-1.2l1-5L1.100 8.900c-.7-.7-.3-1.900.7-2l5-.600 2.100-4.600c.2-.5.600-.800 1.100-.800z" fill="#eda640"/></svg>
<div class="dot" style="left:312px;top:202px;background:#6eaf78"></div>
<div class="c top l " style="left:382px;top:194px;width:606px;height:76px;padding-left:108.5px">Identify goals / objectives / scope</div>
<div class="c top l" style="left:990px;top:194px;width:666px;height:76px;"><span>Determine if EVS questions and Global Ops concerns<br>and suggestions match</span></div>
<div class="c mid l" style="left:1658px;top:194px;width:160px;height:76px;">Complete</div>
<div class="cb on" style="left:1872px;top:216.0px"><svg style="left:0;top:0" width="28" height="28" viewBox="0 0 28 28" fill="none" stroke="#fff" stroke-width="3.7" stroke-linecap="butt" stroke-linejoin="miter"><path d="M6.3 13.800L13.300 20.800L23.300 7.700"/></svg></div>
<div class="c mid ctr" style="left:1954px;top:194px;width:168px;height:76px;">06/09/21</div>
<div class="c mid ctr" style="left:2124px;top:194px;width:150px;height:76px;">06/06/21</div>
<div class="c mid ctr" style="left:2276px;top:194px;width:142px;height:76px;">06/09/21</div>
<div class="c top ctr" style="left:2420px;top:194px;width:168px;height:76px;">100%</div>
<div class="c top l" style="left:2590px;top:194px;width:102px;height:76px;">Collaboration Survey</div>
<div class="dot" style="left:312px;top:280px;background:#c1272d"></div>
<div class="c top l " style="left:382px;top:272px;width:606px;height:76px;padding-left:108.5px">Develop Survey #1</div>
<div class="c top l" style="left:990px;top:272px;width:666px;height:76px;"><span>Coordinate with existing GTS collaboration survey<br>efforts</span></div>
<div class="c mid l" style="left:1658px;top:272px;width:160px;height:76px;">In Review</div>
<div class="cb off" style="left:1872px;top:294.0px"></div>
<div class="c mid ctr" style="left:1954px;top:272px;width:168px;height:76px;">06/12/21</div>
<div class="c mid ctr" style="left:2124px;top:272px;width:150px;height:76px;">06/08/21</div>
<div class="c top ctr" style="left:2420px;top:272px;width:168px;height:76px;">65%</div>
<div class="c top l" style="left:2590px;top:272px;width:102px;height:76px;">Collaboration Survey</div>
<svg style="left:136.7px;top:382.2px" width="20.6" height="20.9" viewBox="0 0 20 20" preserveAspectRatio="none"><path d="M10 0.9c.5 0 .9.3 1.1.8l2.1 4.6 5 .6c1 .1 1.4 1.3.7 2l-3.7 3.5 1 5c.2 1-.8 1.7-1.7 1.2L10 16.1l-4.5 2.5c-.9.5-1.9-.2-1.7-1.2l1-5L1.100 8.900c-.7-.7-.3-1.900.7-2l5-.600 2.100-4.600c.2-.5.600-.800 1.100-.800z" fill="#eda640"/></svg>
<svg style="left:160.7px;top:382.2px" width="20.6" height="20.9" viewBox="0 0 20 20" preserveAspectRatio="none"><path d="M10 0.9c.5 0 .9.3 1.1.8l2.1 4.6 5 .6c1 .1 1.4 1.3.7 2l-3.7 3.5 1 5c.2 1-.8 1.7-1.7 1.2L10 16.1l-4.5 2.5c-.9.5-1.9-.2-1.7-1.2l1-5L1.100 8.900c-.7-.7-.3-1.900.7-2l5-.600 2.100-4.600c.2-.5.600-.800 1.100-.800z" fill="#eda640"/></svg>
<svg style="left:184.7px;top:382.2px" width="20.6" height="20.9" viewBox="0 0 20 20" preserveAspectRatio="none"><path d="M10 0.9c.5 0 .9.3 1.1.8l2.1 4.6 5 .6c1 .1 1.4 1.3.7 2l-3.7 3.5 1 5c.2 1-.8 1.7-1.7 1.2L10 16.1l-4.5 2.5c-.9.5-1.9-.2-1.7-1.2l1-5L1.100 8.900c-.7-.7-.3-1.900.7-2l5-.600 2.100-4.600c.2-.5.600-.800 1.100-.800z" fill="#eda640"/></svg>
<svg style="left:208.7px;top:382.2px" width="20.6" height="20.9" viewBox="0 0 20 20" preserveAspectRatio="none"><path d="M10 0.9c.5 0 .9.3 1.1.8l2.1 4.6 5 .6c1 .1 1.4 1.3.7 2l-3.7 3.5 1 5c.2 1-.8 1.7-1.7 1.2L10 16.1l-4.5 2.5c-.9.5-1.9-.2-1.7-1.2l1-5L1.100 8.900c-.7-.7-.3-1.900.7-2l5-.600 2.100-4.600c.2-.5.600-.800 1.100-.800z" fill="#eda640"/></svg>
<svg style="left:232.7px;top:382.2px" width="20.6" height="20.9" viewBox="0 0 20 20" preserveAspectRatio="none"><path d="M10 0.9c.5 0 .9.3 1.1.8l2.1 4.6 5 .6c1 .1 1.4 1.3.7 2l-3.7 3.5 1 5c.2 1-.8 1.7-1.7 1.2L10 16.1l-4.5 2.5c-.9.5-1.9-.2-1.7-1.2l1-5L1.100 8.900c-.7-.7-.3-1.900.7-2l5-.600 2.100-4.600c.2-.5.600-.800 1.100-.800z" fill="#cccccc"/></svg>
<div class="ex" style="left:428px;top:358px"></div>
<div class="c top l b" style="left:382px;top:350px;width:606px;height:88px;padding-left:79px">Agile Strategy</div>
<div class="c top l sm" style="left:990px;top:350px;width:666px;height:88px;"><span>Drive increased collaboration through adoption of iterative work<br>model that encourages cross-functional partnership, synchronized<br>planning and constant interaction</span></div>
<div class="c mid r sm" style="left:1658px;top:350px;width:160px;height:88px;"><span>Initiative<br>Summary</span></div>
<div class="c mid ctr b" style="left:1820px;top:350px;width:132px;height:88px;">0 of 3</div>
<div class="c mid ctr" style="left:2420px;top:350px;width:168px;height:88px;">0%</div>
<svg style="left:136.7px;top:452.2px" width="20.6" height="20.9" viewBox="0 0 20 20" preserveAspectRatio="none"><path d="M10 0.9c.5 0 .9.3 1.1.8l2.1 4.6 5 .6c1 .1 1.4 1.3.7 2l-3.7 3.5 1 5c.2 1-.8 1.7-1.7 1.2L10 16.1l-4.5 2.5c-.9.5-1.9-.2-1.7-1.2l1-5L1.100 8.900c-.7-.7-.3-1.900.7-2l5-.600 2.100-4.600c.2-.5.600-.800 1.100-.800z" fill="#eda640"/></svg>
<svg style="left:160.7px;top:452.2px" width="20.6" height="20.9" viewBox="0 0 20 20" preserveAspectRatio="none"><path d="M10 0.9c.5 0 .9.3 1.1.8l2.1 4.6 5 .6c1 .1 1.4 1.3.7 2l-3.7 3.5 1 5c.2 1-.8 1.7-1.7 1.2L10 16.1l-4.5 2.5c-.9.5-1.9-.2-1.7-1.2l1-5L1.100 8.900c-.7-.7-.3-1.900.7-2l5-.600 2.100-4.600c.2-.5.600-.800 1.100-.800z" fill="#eda640"/></svg>
<svg style="left:184.7px;top:452.2px" width="20.6" height="20.9" viewBox="0 0 20 20" preserveAspectRatio="none"><path d="M10 0.9c.5 0 .9.3 1.1.8l2.1 4.6 5 .6c1 .1 1.4 1.3.7 2l-3.7 3.5 1 5c.2 1-.8 1.7-1.7 1.2L10 16.1l-4.5 2.5c-.9.5-1.9-.2-1.7-1.2l1-5L1.100 8.900c-.7-.7-.3-1.900.7-2l5-.600 2.100-4.600c.2-.5.600-.800 1.100-.800z" fill="#eda640"/></svg>
<svg style="left:208.7px;top:452.2px" width="20.6" height="20.9" viewBox="0 0 20 20" preserveAspectRatio="none"><path d="M10 0.9c.5 0 .9.3 1.1.8l2.1 4.6 5 .6c1 .1 1.4 1.3.7 2l-3.7 3.5 1 5c.2 1-.8 1.7-1.7 1.2L10 16.1l-4.5 2.5c-.9.5-1.9-.2-1.7-1.2l1-5L1.100 8.900c-.7-.7-.3-1.900.7-2l5-.600 2.100-4.600c.2-.5.600-.800 1.100-.800z" fill="#eda640"/></svg>
<svg style="left:232.7px;top:452.2px" width="20.6" height="20.9" viewBox="0 0 20 20" preserveAspectRatio="none"><path d="M10 0.9c.5 0 .9.3 1.1.8l2.1 4.6 5 .6c1 .1 1.4 1.3.7 2l-3.7 3.5 1 5c.2 1-.8 1.7-1.7 1.2L10 16.1l-4.5 2.5c-.9.5-1.9-.2-1.7-1.2l1-5L1.100 8.900c-.7-.7-.3-1.900.7-2l5-.600 2.100-4.600c.2-.5.600-.800 1.100-.800z" fill="#eda640"/></svg>
<div class="dot" style="left:312px;top:448px;background:#6eaf78"></div>
<div class="c top l " style="left:382px;top:440px;width:606px;height:48px;padding-left:108.5px">Task 1</div>
<div class="cb off" style="left:1872px;top:448.0px"></div>
<div class="c top ctr" style="left:2420px;top:440px;width:168px;height:48px;">0%</div>
<div class="c top l" style="left:2590px;top:440px;width:102px;height:48px;">Agile Strategy</div>
<div class="dot" style="left:312px;top:498px;background:#f0cf4d"></div>
<div class="c top l " style="left:382px;top:490px;width:606px;height:48px;padding-left:108.5px">Task 2</div>
<div class="cb off" style="left:1872px;top:498.0px"></div>
<div class="c top ctr" style="left:2420px;top:490px;width:168px;height:48px;">0%</div>
<div class="c top l" style="left:2590px;top:490px;width:102px;height:48px;">Agile Strategy</div>
<div class="dot" style="left:312px;top:548px;background:#6eaf78"></div>
<div class="c top l " style="left:382px;top:540px;width:606px;height:48px;padding-left:108.5px">Task 3</div>
<div class="cb off" style="left:1872px;top:548.0px"></div>
<div class="c top ctr" style="left:2420px;top:540px;width:168px;height:48px;">0%</div>
<div class="c top l" style="left:2590px;top:540px;width:102px;height:48px;">Agile Strategy</div>
<svg style="left:136.7px;top:610.2px" width="20.6" height="20.9" viewBox="0 0 20 20" preserveAspectRatio="none"><path d="M10 0.9c.5 0 .9.3 1.1.8l2.1 4.6 5 .6c1 .1 1.4 1.3.7 2l-3.7 3.5 1 5c.2 1-.8 1.7-1.7 1.2L10 16.1l-4.5 2.5c-.9.5-1.9-.2-1.7-1.2l1-5L1.100 8.900c-.7-.7-.3-1.900.7-2l5-.600 2.100-4.600c.2-.5.600-.800 1.100-.800z" fill="#eda640"/></svg>
<svg style="left:160.7px;top:610.2px" width="20.6" height="20.9" viewBox="0 0 20 20" preserveAspectRatio="none"><path d="M10 0.9c.5 0 .9.3 1.1.8l2.1 4.6 5 .6c1 .1 1.4 1.3.7 2l-3.7 3.5 1 5c.2 1-.8 1.7-1.7 1.2L10 16.1l-4.5 2.5c-.9.5-1.9-.2-1.7-1.2l1-5L1.100 8.900c-.7-.7-.3-1.900.7-2l5-.600 2.100-4.600c.2-.5.600-.800 1.100-.800z" fill="#eda640"/></svg>
<svg style="left:184.7px;top:610.2px" width="20.6" height="20.9" viewBox="0 0 20 20" preserveAspectRatio="none"><path d="M10 0.9c.5 0 .9.3 1.1.8l2.1 4.6 5 .6c1 .1 1.4 1.3.7 2l-3.7 3.5 1 5c.2 1-.8 1.7-1.7 1.2L10 16.1l-4.5 2.5c-.9.5-1.9-.2-1.7-1.2l1-5L1.100 8.900c-.7-.7-.3-1.900.7-2l5-.600 2.100-4.600c.2-.5.600-.800 1.100-.800z" fill="#eda640"/></svg>
<svg style="left:208.7px;top:610.2px" width="20.6" height="20.9" viewBox="0 0 20 20" preserveAspectRatio="none"><path d="M10 0.9c.5 0 .9.3 1.1.8l2.1 4.6 5 .6c1 .1 1.4 1.3.7 2l-3.7 3.5 1 5c.2 1-.8 1.7-1.7 1.2L10 16.1l-4.5 2.5c-.9.5-1.9-.2-1.7-1.2l1-5L1.100 8.900c-.7-.7-.3-1.900.7-2l5-.600 2.100-4.600c.2-.5.600-.800 1.100-.800z" fill="#cccccc"/></svg>
<svg style="left:232.7px;top:610.2px" width="20.6" height="20.9" viewBox="0 0 20 20" preserveAspectRatio="none"><path d="M10 0.9c.5 0 .9.3 1.1.8l2.1 4.6 5 .6c1 .1 1.4 1.3.7 2l-3.7 3.5 1 5c.2 1-.8 1.7-1.7 1.2L10 16.1l-4.5 2.5c-.9.5-1.9-.2-1.7-1.2l1-5L1.100 8.900c-.7-.7-.3-1.900.7-2l5-.600 2.100-4.600c.2-.5.600-.800 1.100-.800z" fill="#cccccc"/></svg>
<div class="ex" style="left:428px;top:598px"></div>
<div class="c top l b" style="left:382px;top:590px;width:606px;height:64px;padding-left:79px">Manager Circles</div>
<div class="c top l sm" style="left:990px;top:590px;width:666px;height:64px;">tbd</div>
<div class="c mid r sm" style="left:1658px;top:590px;width:160px;height:64px;"><span>Initiative<br>Summary</span></div>
<div class="c mid ctr b" style="left:1820px;top:590px;width:132px;height:64px;">0 of 3</div>
<div class="c mid ctr" style="left:2420px;top:590px;width:168px;height:64px;">0%</div>
<div class="dot" style="left:312px;top:664px;background:#f0cf4d"></div>
<div class="c top l " style="left:382px;top:656px;width:606px;height:48px;padding-left:108.5px">Task 1</div>
<div class="cb off" style="left:1872px;top:664.0px"></div>
<div class="c top ctr" style="left:2420px;top:656px;width:168px;height:48px;">0%</div>
<div class="c top l" style="left:2590px;top:656px;width:102px;height:48px;">Manager Circles</div>
<div class="dot" style="left:312px;top:714px;background:#f0cf4d"></div>
<div class="c top l " style="left:382px;top:706px;width:606px;height:48px;padding-left:108.5px">Task 2</div>
<div class="cb off" style="left:1872px;top:714.0px"></div>
<div class="c top ctr" style="left:2420px;top:706px;width:168px;height:48px;">0%</div>
<div class="c top l" style="left:2590px;top:706px;width:102px;height:48px;">Manager Circles</div>
<div class="dot" style="left:312px;top:764px;background:#6eaf78"></div>
<div class="c top l " style="left:382px;top:756px;width:606px;height:48px;padding-left:108.5px">Task 3</div>
<div class="cb off" style="left:1872px;top:764.0px"></div>
<div class="c top ctr" style="left:2420px;top:756px;width:168px;height:48px;">0%</div>
<div class="c top l" style="left:2590px;top:756px;width:102px;height:48px;">Manager Circles</div>
<svg style="left:136.7px;top:826.2px" width="20.6" height="20.9" viewBox="0 0 20 20" preserveAspectRatio="none"><path d="M10 0.9c.5 0 .9.3 1.1.8l2.1 4.6 5 .6c1 .1 1.4 1.3.7 2l-3.7 3.5 1 5c.2 1-.8 1.7-1.7 1.2L10 16.1l-4.5 2.5c-.9.5-1.9-.2-1.7-1.2l1-5L1.100 8.900c-.7-.7-.3-1.900.7-2l5-.600 2.100-4.600c.2-.5.600-.800 1.100-.800z" fill="#eda640"/></svg>
<svg style="left:160.7px;top:826.2px" width="20.6" height="20.9" viewBox="0 0 20 20" preserveAspectRatio="none"><path d="M10 0.9c.5 0 .9.3 1.1.8l2.1 4.6 5 .6c1 .1 1.4 1.3.7 2l-3.7 3.5 1 5c.2 1-.8 1.7-1.7 1.2L10 16.1l-4.5 2.5c-.9.5-1.9-.2-1.7-1.2l1-5L1.100 8.900c-.7-.7-.3-1.900.7-2l5-.600 2.100-4.600c.2-.5.600-.800 1.100-.800z" fill="#cccccc"/></svg>
<svg style="left:184.7px;top:826.2px" width="20.6" height="20.9" viewBox="0 0 20 20" preserveAspectRatio="none"><path d="M10 0.9c.5 0 .9.3 1.1.8l2.1 4.6 5 .6c1 .1 1.4 1.3.7 2l-3.7 3.5 1 5c.2 1-.8 1.7-1.7 1.2L10 16.1l-4.5 2.5c-.9.5-1.9-.2-1.7-1.2l1-5L1.100 8.900c-.7-.7-.3-1.900.7-2l5-.600 2.100-4.600c.2-.5.600-.800 1.100-.800z" fill="#cccccc"/></svg>
<svg style="left:208.7px;top:826.2px" width="20.6" height="20.9" viewBox="0 0 20 20" preserveAspectRatio="none"><path d="M10 0.9c.5 0 .9.3 1.1.8l2.1 4.6 5 .6c1 .1 1.4 1.3.7 2l-3.7 3.5 1 5c.2 1-.8 1.7-1.7 1.2L10 16.1l-4.5 2.5c-.9.5-1.9-.2-1.7-1.2l1-5L1.100 8.900c-.7-.7-.3-1.900.7-2l5-.600 2.100-4.600c.2-.5.600-.800 1.100-.800z" fill="#cccccc"/></svg>
<svg style="left:232.7px;top:826.2px" width="20.6" height="20.9" viewBox="0 0 20 20" preserveAspectRatio="none"><path d="M10 0.9c.5 0 .9.3 1.1.8l2.1 4.6 5 .6c1 .1 1.4 1.3.7 2l-3.7 3.5 1 5c.2 1-.8 1.7-1.7 1.2L10 16.1l-4.5 2.5c-.9.5-1.9-.2-1.7-1.2l1-5L1.100 8.900c-.7-.7-.3-1.900.7-2l5-.600 2.100-4.600c.2-.5.600-.800 1.100-.800z" fill="#cccccc"/></svg>
<div class="ex" style="left:428px;top:814px"></div>
<div class="c top l b" style="left:382px;top:806px;width:606px;height:64px;padding-left:79px">Brown Bags</div>
<div class="c top l sm" style="left:990px;top:806px;width:666px;height:64px;"><span>Improve cross-functional collaboration and knowledge sharing<br>across Global Ops</span></div>
<div class="c mid r sm" style="left:1658px;top:806px;width:160px;height:64px;"><span>Initiative<br>Summary</span></div>
<div class="c mid ctr b" style="left:1820px;top:806px;width:132px;height:64px;">2 of 2</div>
<div class="c mid ctr" style="left:1954px;top:806px;width:168px;height:64px;">06/11/21</div>
<div class="c mid ctr" style="left:2124px;top:806px;width:150px;height:64px;">06/05/21</div>
<div class="c mid ctr" style="left:2276px;top:806px;width:142px;height:64px;">06/11/21</div>
<div class="c mid ctr" style="left:2420px;top:806px;width:168px;height:64px;">100%</div>
<div class="dot" style="left:312px;top:880px;background:#6eaf78"></div>
<div class="c top l " style="left:382px;top:872px;width:606px;height:48px;padding-left:108.5px">Task 1</div>
<div class="c top l" style="left:990px;top:872px;width:666px;height:48px;">Expand Brown Bags topics to cover all of Global Ops</div>
<div class="c mid l" style="left:1658px;top:872px;width:160px;height:48px;">Complete</div>
<div class="cb on" style="left:1872px;top:880.0px"><svg style="left:0;top:0" width="28" height="28" viewBox="0 0 28 28" fill="none" stroke="#fff" stroke-width="3.7" stroke-linecap="butt" stroke-linejoin="miter"><path d="M6.3 13.800L13.300 20.800L23.300 7.700"/></svg></div>
<div class="c mid ctr" style="left:1954px;top:872px;width:168px;height:48px;">06/08/21</div>
<div class="c mid ctr" style="left:2124px;top:872px;width:150px;height:48px;">06/05/21</div>
<div class="c mid ctr" style="left:2276px;top:872px;width:142px;height:48px;">06/08/21</div>
<div class="c top ctr" style="left:2420px;top:872px;width:168px;height:48px;">100%</div>
<div class="c top l" style="left:2590px;top:872px;width:102px;height:48px;">Brown Bags</div>
<div class="dot" style="left:312px;top:930px;background:#6eaf78"></div>
<div class="c top l " style="left:382px;top:922px;width:606px;height:48px;padding-left:108.5px">Task 2</div>
<div class="c mid l" style="left:1658px;top:922px;width:160px;height:48px;">Complete</div>
<div class="cb on" style="left:1872px;top:930.0px"><svg style="left:0;top:0" width="28" height="28" viewBox="0 0 28 28" fill="none" stroke="#fff" stroke-width="3.7" stroke-linecap="butt" stroke-linejoin="miter"><path d="M6.3 13.800L13.300 20.800L23.300 7.700"/></svg></div>
<div class="c mid ctr" style="left:1954px;top:922px;width:168px;height:48px;">06/11/21</div>
<div class="c mid ctr" style="left:2124px;top:922px;width:150px;height:48px;">06/08/21</div>
<div class="c mid ctr" style="left:2276px;top:922px;width:142px;height:48px;">06/11/21</div>
<div class="c top ctr" style="left:2420px;top:922px;width:168px;height:48px;">100%</div>
<div class="c top l" style="left:2590px;top:922px;width:102px;height:48px;">Brown Bags</div>
</div>
<div id="rpanel"></div>
<svg style="left:2802px;top:118px" width="40" height="36" viewBox="0 0 40 36" fill="none" stroke="#424242" stroke-width="3" stroke-linecap="round" stroke-linejoin="round" ><path d="M1.5 1.5H38.5V28.5H16.5L9.5 34V28.5H1.5Z"/></svg>
<svg style="left:2802px;top:210px" width="40" height="40" viewBox="0 0 40 40" fill="none" stroke="#424242" stroke-width="3" stroke-linecap="round" stroke-linejoin="round" ><g transform="translate(10.2 29.4) rotate(-45)"><path d="M5.8 8.7H0A8.7 8.7 0 0 1 0 -8.7H27.15A8.7 8.7 0 0 1 27.15 8.7H12.3A5 5 0 0 1 12.3 -1.3H23.8"/></g></svg>
<svg style="left:2802px;top:306px" width="40" height="40" viewBox="0 0 40 40" fill="none" stroke="#424242" stroke-width="3" stroke-linecap="round" stroke-linejoin="round" ><path d="M11 1.5H29.5M8 7.5H32.500"/><path d="M1.5 13.500H38.500V30A8.500 8.500 0 0 1 30 38.500H1.500Z"/><path d="M29.5 38.500V29.500H38.500"/></svg>
<svg style="left:2802px;top:402px" width="40" height="40" viewBox="0 0 40 40" fill="none" stroke="#424242" stroke-width="3" stroke-linecap="round" stroke-linejoin="round" ><path d="M17.56 4.590A15.600 15.600 0 0 1 29.800 32.600"/><path d="M28.3 25.700L30 33.200L37.800 31.800"/><path d="M22.44 35.410A15.600 15.600 0 0 1 10.200 7.400"/><path d="M11.7 14.300L10 6.800L2.200 8.200"/><path d="M13.7 20L18.3 25L26.200 16.700"/></svg>
<svg style="left:2806px;top:498px" width="32" height="40" viewBox="0 0 32 40" fill="none" stroke="#424242" stroke-width="3" stroke-linecap="round" stroke-linejoin="round" ><path d="M1.5 1.5H21A9.500 9.500 0 0 1 30.500 11V38.500H1.500Z"/><path d="M19.5 1.500V11.500H30.500"/><path d="M16 32.500V18.500M10.500 24L16 18.500L21.500 24"/></svg>
<svg style="left:2802px;top:594px" width="40" height="40" viewBox="0 0 40 40" fill="none" stroke="#424242" stroke-width="3" stroke-linecap="round" stroke-linejoin="round" ><circle cx="20" cy="20" r="18.3"/><path d="M6.5 20H15L18.3 13L24.7 26.500L28 20H33.500"/></svg>
<svg style="left:2802px;top:690px" width="40" height="40" viewBox="0 0 40 40" fill="none" stroke="#424242" stroke-width="3" stroke-linecap="round" stroke-linejoin="round" ><path d="M10 7.500V1.500H38.500V29A9.500 9.500 0 0 1 29 38.500H10V32.500"/><path d="M28.5 38.500V28H38.500"/><rect x="1.5" y="8" width="15" height="24" rx="1.500"/><path d="M7.5 14.500H10.500M7.500 20H10.500M7.500 25.500H10.500"/></svg>
<svg style="left:2806px;top:785px" width="32" height="41" viewBox="0 0 32 41" fill="#424242" stroke="none" stroke-width="3" stroke-linecap="round" stroke-linejoin="round" ><path d="M16 1C22 1 25.500 6 25.500 11.500C25.500 18 19 27 16 31.500C13 27 6.500 18 6.500 11.500C6.500 6 10 1 16 1Z"/><path d="M5.5 2.800C1.500 5.500 0 9.500 0 13.500C0 20 7 27 12.500 31.500C7 25 3 18.500 3 12.500C3 8.500 4 5 5.500 2.800Z"/><path d="M26.5 2.800C30.500 5.500 32 9.500 32 13.500C32 20 25 27 19.500 31.500C25 25 29 18.500 29 12.500C29 8.500 28 5 26.500 2.800Z"/><path d="M11.5 34H20.500L19.200 39.500a1.500 1.500 0 0 1-1.500 1.300H14.300a1.500 1.500 0 0 1-1.500-1.300Z"/></svg>
<svg style="left:2802px;top:882px" width="40" height="40" viewBox="0 0 40 40" fill="none" stroke="#424242" stroke-width="3" stroke-linecap="round" stroke-linejoin="round" ><rect x="1.5" y="1.5" width="37" height="37" rx="1.5"/><path d="M11 21.500V28.500M17 11.500V28.500M23 17.500V28.500M29 23.500V28.500" stroke-width="3.2"/></svg>
<div class="abs" style="left:2796px;top:950px;width:52px;height:2px;background:#e2e2e2"></div>
<div class="abs" style="left:2806px;top:984px;width:14px;height:14px;background:#969696"></div>
<div class="abs" style="left:2824px;top:984px;width:14px;height:14px;background:#969696"></div>
<div class="abs" style="left:2806px;top:1002px;width:14px;height:14px;background:#969696"></div>
<div class="abs" style="left:2824px;top:1002px;width:14px;height:14px;background:#969696"></div>
<svg style="left:2802px;top:1076px" width="40" height="40" viewBox="0 0 40 40" fill="#969696" stroke="none" stroke-width="3" stroke-linecap="round" stroke-linejoin="round" ><path fill-rule="evenodd" d="M20 0L40 20L20 40L0 20ZM20 13.700L26.300 20L20 26.300L13.700 20Z"/></svg>
<svg style="left:2802px;top:1179px" width="40" height="28" viewBox="0 0 40 28" fill="#969696" stroke="none" stroke-width="3" stroke-linecap="round" stroke-linejoin="round" ><circle cx="10.2" cy="7.5" r="7"/><circle cx="21.6" cy="8.5" r="6.5"/><circle cx="32" cy="12.500" r="8"/><circle cx="6" cy="16.500" r="6"/><circle cx="15" cy="20" r="7"/><circle cx="24.5" cy="17" r="6.5"/><rect x="8" y="6" width="22" height="14"/></svg></div></body></html>
